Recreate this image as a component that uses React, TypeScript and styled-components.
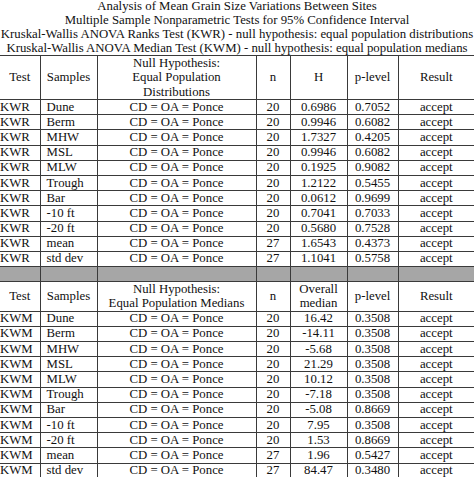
import * as React from "react";
import styled, { createGlobalStyle } from "styled-components";

const GlobalStyle = createGlobalStyle`
  html, body {
    margin: 0;
    padding: 0;
    background: #fff;
  }
  body {
    font-family: "Liberation Serif", "Times New Roman", serif;
    color: #111;
    overflow: hidden;
  }
`;

const Page = styled.div`
  width: 474px;
  height: 477px;
  overflow: hidden;
`;

const Titles = styled.div`
  margin-top: -1px;
  text-align: center;
  font-size: 12.8px;
  line-height: 14px;
  white-space: nowrap;
`;

const Table = styled.table`
  width: 474px;
  border-collapse: collapse;
  table-layout: fixed;
  font-family: "Liberation Serif", "Times New Roman", serif;
  font-size: 12.8px;
`;

const Th = styled.th`
  font-weight: normal;
  border: 1px solid #3a3a3a;
  padding: 0;
  line-height: 14.3px;
  text-align: center;
  white-space: nowrap;
  &:first-child { border-left: none; }
  &:last-child { border-right: none; }
`;

const HeadRow = styled.tr<{ $h: number }>`
  height: ${(p) => p.$h}px;
`;

const Row = styled.tr`
  height: 15.2px;
`;

const Td = styled.td<{ $align?: "left" | "center"; $pad?: number }>`
  border: 1px solid #3a3a3a;
  padding: 0 0 0 ${(p) => p.$pad ?? 0}px;
  line-height: 13px;
  text-align: ${(p) => p.$align ?? "center"};
  white-space: nowrap;
  &:first-child { border-left: none; }
  &:last-child { border-right: none; }
`;

const GapRow = styled.tr`
  height: 15px;
  background: #a6a6a6;
`;

const GapCell = styled.td`
  border: 1px solid #3a3a3a;
  padding: 0;
  &:first-child { border-left: none; }
  &:last-child { border-right: none; }
`;

const samples = ["Dune", "Berm", "MHW", "MSL", "MLW", "Trough", "Bar", "-10 ft", "-20 ft", "mean", "std dev"];

const kwr = [
  ["20", "0.6986", "0.7052"],
  ["20", "0.9946", "0.6082"],
  ["20", "1.7327", "0.4205"],
  ["20", "0.9946", "0.6082"],
  ["20", "0.1925", "0.9082"],
  ["20", "1.2122", "0.5455"],
  ["20", "0.0612", "0.9699"],
  ["20", "0.7041", "0.7033"],
  ["20", "0.5680", "0.7528"],
  ["27", "1.6543", "0.4373"],
  ["27", "1.1041", "0.5758"],
];

const kwm = [
  ["20", "16.42", "0.3508"],
  ["20", "-14.11", "0.3508"],
  ["20", "-5.68", "0.3508"],
  ["20", "21.29", "0.3508"],
  ["20", "10.12", "0.3508"],
  ["20", "-7.18", "0.3508"],
  ["20", "-5.08", "0.8669"],
  ["20", "7.95", "0.3508"],
  ["20", "1.53", "0.8669"],
  ["27", "1.96", "0.5427"],
  ["27", "84.47", "0.3480"],
];

const widths = [40, 57, 159, 34, 57, 51, 76];

const DataRows = ({ test, data }: { test: string; data: string[][] }) => (
  <>
    {data.map((d, i) => (
      <Row key={test + i}>
        <Td $align="left" $pad={0}>{test}</Td>
        <Td $align="left" $pad={6}>{samples[i]}</Td>
        <Td>CD = OA = Ponce</Td>
        <Td>{d[0]}</Td>
        <Td>{d[1]}</Td>
        <Td>{d[2]}</Td>
        <Td>accept</Td>
      </Row>
    ))}
  </>
);

export default function App() {
  return (
    <Page>
      <GlobalStyle />
      <Titles>
        <div>Analysis of Mean Grain Size Variations Between Sites</div>
        <div>Multiple Sample Nonparametric Tests for 95% Confidence Interval</div>
        <div>Kruskal-Wallis ANOVA Ranks Test (KWR) - null hypothesis: equal population distributions</div>
        <div>Kruskal-Wallis ANOVA Median Test (KWM) - null hypothesis: equal population medians</div>
      </Titles>
      <Table>
        <colgroup>
          {widths.map((w, i) => (
            <col key={i} style={{ width: w }} />
          ))}
        </colgroup>
        <tbody>
          <HeadRow $h={44}>
            <Th>Test</Th>
            <Th>Samples</Th>
            <Th>
              Null Hypothesis:
              <br />
              Equal Population
              <br />
              Distributions
            </Th>
            <Th>n</Th>
            <Th>H</Th>
            <Th>p-level</Th>
            <Th>Result</Th>
          </HeadRow>
          <DataRows test="KWR" data={kwr} />
          <GapRow>
            {widths.map((_, i) => (
              <GapCell key={i} />
            ))}
          </GapRow>
          <HeadRow $h={29}>
            <Th>Test</Th>
            <Th>Samples</Th>
            <Th>
              Null Hypothesis:
              <br />
              Equal Population Medians
            </Th>
            <Th>n</Th>
            <Th>
              Overall
              <br />
              median
            </Th>
            <Th>p-level</Th>
            <Th>Result</Th>
          </HeadRow>
          <DataRows test="KWM" data={kwm} />
        </tbody>
      </Table>
    </Page>
  );
}
